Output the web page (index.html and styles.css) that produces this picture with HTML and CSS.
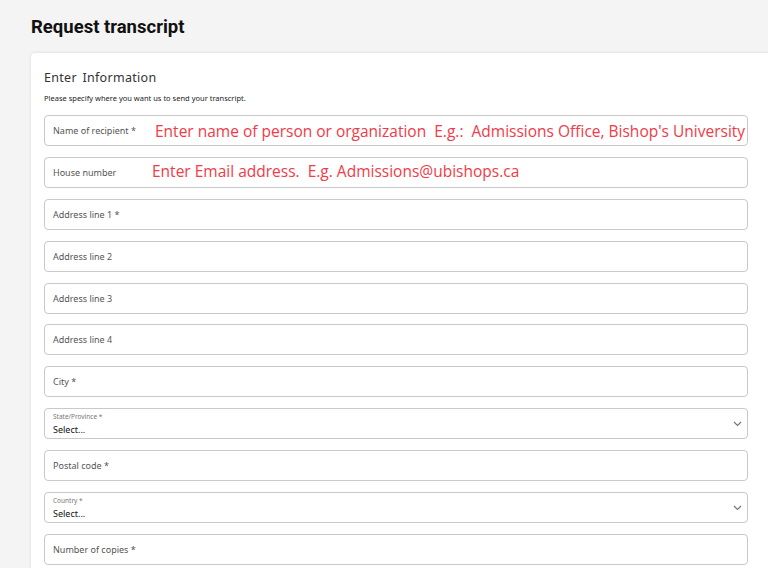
FILE: index.html
```html
<!DOCTYPE html>
<html>
<head>
<meta charset="utf-8">
<link rel="stylesheet" href="styles.css">
</head>
<body>
<div class="page">
  <h1 class="title">Request transcript</h1>
  <div class="card">
    <h2 class="section">Enter Information</h2>
    <p class="hint">Please specify where you want us to send your transcript.</p>
    <div class="fields">
      <div class="field">
        <span class="label">Name of recipient *</span>
        <span class="note note-1">Enter name of person or organization&nbsp; E.g.:&nbsp; Admissions Office, Bishop's University</span>
      </div>
      <div class="field">
        <span class="label">House number</span>
        <span class="note note-2">Enter Email address.&nbsp; E.g. Admissions@ubishops.ca</span>
      </div>
      <div class="field"><span class="label">Address line 1 *</span></div>
      <div class="field"><span class="label">Address line 2</span></div>
      <div class="field"><span class="label">Address line 3</span></div>
      <div class="field"><span class="label">Address line 4</span></div>
      <div class="field"><span class="label">City *</span></div>
      <div class="field select">
        <div class="select-text">
          <span class="mini">State/Province *</span>
          <span class="value">Select...</span>
        </div>
        <svg class="chev" width="9" height="6" viewBox="0 0 9 6"><path d="M1 1l3.5 3.5L8 1" fill="none" stroke="#777" stroke-width="1.2"/></svg>
      </div>
      <div class="field"><span class="label">Postal code *</span></div>
      <div class="field select">
        <div class="select-text">
          <span class="mini">Country *</span>
          <span class="value">Select...</span>
        </div>
        <svg class="chev" width="9" height="6" viewBox="0 0 9 6"><path d="M1 1l3.5 3.5L8 1" fill="none" stroke="#777" stroke-width="1.2"/></svg>
      </div>
      <div class="field"><span class="label">Number of copies *</span></div>
    </div>
  </div>
</div>
</body>
</html>
```
FILE: styles.css
```css
html, body {
  margin: 0;
  padding: 0;
  background: #f4f4f4;
  overflow: hidden;
}
.page {
  padding: 16px 0 0 31px;
  font-family: "Noto Sans", sans-serif;
}
.title {
  margin: 0 0 15px 0;
  font-family: Roboto, "Noto Sans", sans-serif;
  font-size: 18.5px;
  font-weight: 700;
  color: #111;
  line-height: 22px;
}
.card {
  background: #fff;
  border-radius: 4px 0 0 0;
  box-shadow: 0 0 3px rgba(0,0,0,0.12);
  margin-right: -6px;
  padding: 16px 26px 0 13px;
  height: 600px;
}
.section {
  margin: 0;
  font-size: 12.5px;
  font-weight: 400;
  color: #333;
  line-height: 18px;
  letter-spacing: 0.3px;
  word-spacing: 2px;
}
.hint {
  margin: 5px 0 11px 0;
  font-size: 7.5px;
  color: #222;
  line-height: 12px;
}
.fields {
  display: flex;
  flex-direction: column;
  gap: 10.9px;
}
.field {
  position: relative;
  box-sizing: border-box;
  height: 31px;
  border: 1px solid #c9c9c9;
  border-radius: 4px;
  display: flex;
  align-items: center;
  padding: 0 8px;
  background: #fff;
}
.label {
  font-size: 9px;
  color: #555;
}
.note {
  position: absolute;
  top: 50%;
  transform: translateY(-50%);
  font-family: "Open Sans", sans-serif;
  font-size: 15.5px;
  color: #f23a48;
  white-space: nowrap;
}
.note-1 { left: 110px; }
.note-2 { left: 107px; top: 45%; }
.select {
  justify-content: space-between;
}
.select-text {
  display: flex;
  flex-direction: column;
  line-height: 1;
  padding-top: 1px;
}
.mini {
  font-size: 6.5px;
  color: #777;
  margin-bottom: 4px;
}
.value {
  font-size: 9px;
  color: #111;
}
.chev {
  margin-right: -3px;
}
```
